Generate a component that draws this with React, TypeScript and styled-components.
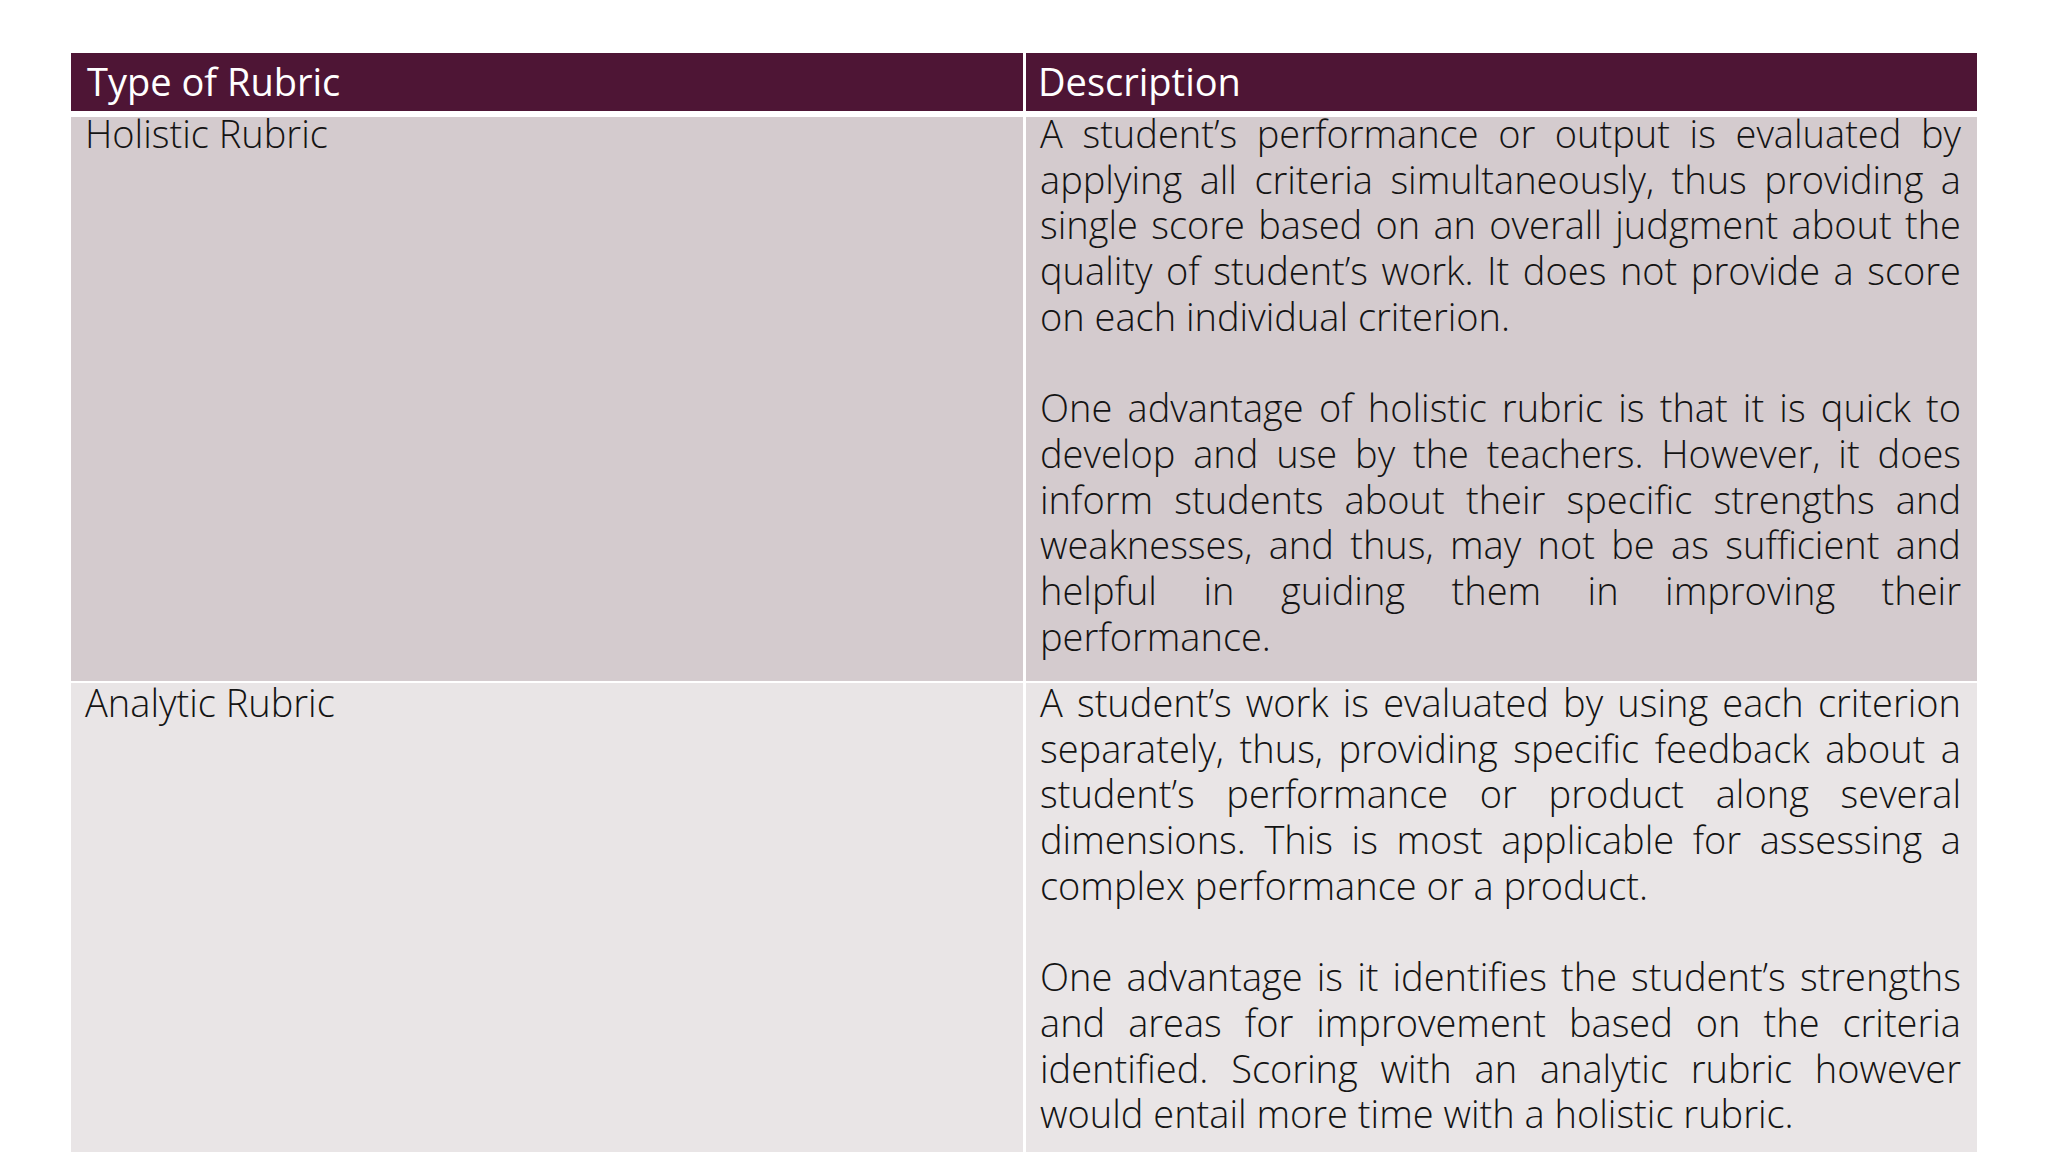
import React from "react";
import styled, { createGlobalStyle } from "styled-components";

const LINE = 45.7;

const Global = createGlobalStyle`
  html, body {
    margin: 0;
    padding: 0;
    background: #ffffff;
    overflow: hidden;
  }
  body {
    font-family: "Open Sans", "Noto Sans", "Liberation Sans", sans-serif;
  }
`;

const Page = styled.main`
  width: 2048px;
  height: 1152px;
  padding: 53px 0 0 71px;
  box-sizing: border-box;
  background: #ffffff;
`;

const Table = styled.section`
  display: grid;
  width: 1906px;
  grid-template-columns: 952px 951px;
  column-gap: 3px;
  background: #ffffff;
`;

const HeaderCell = styled.div<{ $pl: number }>`
  height: 58px;
  box-sizing: border-box;
  padding: 6px 15px 0 ${(p) => p.$pl}px;
  background: #4e1535;
  color: #ffffff;
  font-size: 38px;
  font-weight: 400;
  line-height: ${LINE}px;
  margin-bottom: 6px;
  white-space: nowrap;
`;

const BodyCell = styled.div<{ $shade: string; $height: number; $gapBelow: number }>`
  height: ${(p) => p.$height}px;
  box-sizing: border-box;
  padding: 0 16px 0 14px;
  background: ${(p) => p.$shade};
  color: #141414;
  font-size: 38px;
  font-weight: 300;
  line-height: ${LINE}px;
  margin-bottom: ${(p) => p.$gapBelow}px;
`;

const TextBlock = styled.div<{ $shift: number }>`
  margin-top: ${(p) => p.$shift}px;
`;

const Para = styled.p`
  margin: 0 0 ${LINE}px 0;
  &:last-child {
    margin-bottom: 0;
  }
`;

const Line = styled.span<{ $last?: boolean }>`
  display: block;
  text-align: justify;
  text-align-last: ${(p) => (p.$last ? "left" : "justify")};
`;

type Row = {
  type: string;
  shade: string;
  height: number;
  shift: number;
  gapBelow: number;
  paras: string[][];
};

const rows: Row[] = [
  {
    type: "Holistic Rubric",
    shade: "#d4cbce",
    height: 564,
    shift: -6,
    gapBelow: 2,
    paras: [
      [
        "A student’s performance or output is evaluated by",
        "applying all criteria simultaneously, thus providing a",
        "single score based on an overall judgment about the",
        "quality of student’s work. It does not provide a score",
        "on each individual criterion.",
      ],
      [
        "One advantage of holistic rubric is that it is quick to",
        "develop and use by the teachers. However, it does",
        "inform students about their specific strengths and",
        "weaknesses, and thus, may not be as sufficient and",
        "helpful in guiding them in improving their",
        "performance.",
      ],
    ],
  },
  {
    type: "Analytic Rubric",
    shade: "#e9e5e6",
    height: 469,
    shift: -3,
    gapBelow: 0,
    paras: [
      [
        "A student’s work is evaluated by using each criterion",
        "separately, thus, providing specific feedback about a",
        "student’s performance or product along several",
        "dimensions. This is most applicable for assessing a",
        "complex performance or a product.",
      ],
      [
        "One advantage is it identifies the student’s strengths",
        "and areas for improvement based on the criteria",
        "identified. Scoring with an analytic rubric however",
        "would entail more time with a holistic rubric.",
      ],
    ],
  },
];

export default function App() {
  return (
    <>
      <Global />
      <Page>
        <Table>
          <HeaderCell $pl={16}>Type of Rubric</HeaderCell>
          <HeaderCell $pl={12}>Description</HeaderCell>
          {rows.map((r) => (
            <React.Fragment key={r.type}>
              <BodyCell $shade={r.shade} $height={r.height} $gapBelow={r.gapBelow}>
                <TextBlock $shift={r.shift}>{r.type}</TextBlock>
              </BodyCell>
              <BodyCell $shade={r.shade} $height={r.height} $gapBelow={r.gapBelow}>
                <TextBlock $shift={r.shift}>
                  {r.paras.map((p, i) => (
                    <Para key={i}>
                      {p.map((l, j) => (
                        <Line key={j} $last={j === p.length - 1}>
                          {l}
                        </Line>
                      ))}
                    </Para>
                  ))}
                </TextBlock>
              </BodyCell>
            </React.Fragment>
          ))}
        </Table>
      </Page>
    </>
  );
}
